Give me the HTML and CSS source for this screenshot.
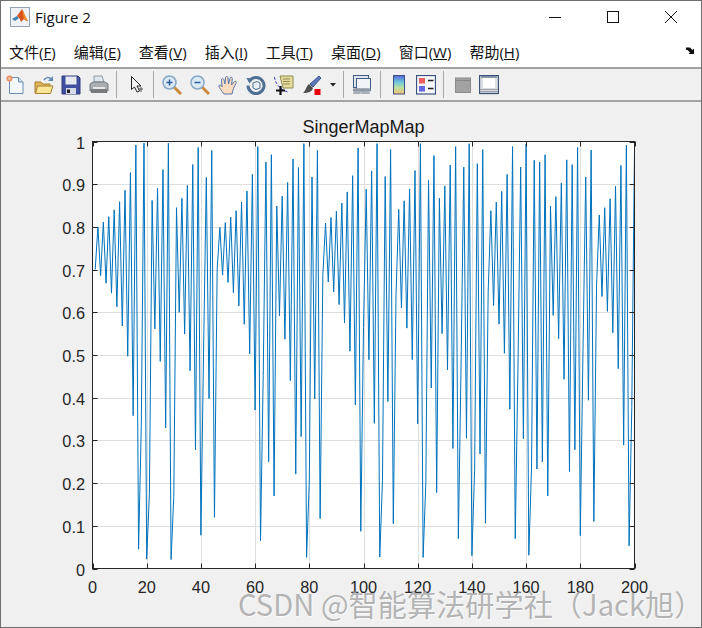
FILE: index.html
```html
<!DOCTYPE html>
<html lang="zh">
<head>
    <meta charset="UTF-8">
    <title>Figure 2</title>
    <link rel="stylesheet" href="styles.css">
</head>
<body>
    <div class="window">
        <div class="titlebar">
            <svg class="app-icon" viewBox="0 0 20 20" width="20" height="20">
                <rect x="0.5" y="0.5" width="19" height="19" fill="#eef2f6" stroke="#93a3b3"/>
                <path d="M2 12l5-3 2 2-4 3z" fill="#3f7fb5"/>
                <path d="M7 9l5-7c2 3 3 8 6 12-2 0-3-1-4-2l-3 3c-1-3-2-5-4-6z" fill="#d9541e"/>
                <path d="M12 2c2 3 3 8 6 12-2 0-3-1-4-2-1-3-1-7-2-10z" fill="#f0902c"/>
            </svg>
            <span class="window-title">Figure 2</span>
            <div class="window-controls">
                <svg class="control" viewBox="0 0 12 12" width="12" height="12"><path d="M0 6.5h12" stroke="#111" fill="none"/></svg>
                <svg class="control" viewBox="0 0 12 12" width="12" height="12"><rect x="0.5" y="0.5" width="11" height="11" stroke="#111" fill="none"/></svg>
                <svg class="control" viewBox="0 0 12 12" width="12" height="12"><path d="M0 0l12 12M12 0L0 12" stroke="#111" fill="none"/></svg>
            </div>
        </div>

        <div class="menubar">
            <span class="menu-item">文件(<u>F</u>)</span>
            <span class="menu-item">编辑(<u>E</u>)</span>
            <span class="menu-item">查看(<u>V</u>)</span>
            <span class="menu-item">插入(<u>I</u>)</span>
            <span class="menu-item">工具(<u>T</u>)</span>
            <span class="menu-item">桌面(<u>D</u>)</span>
            <span class="menu-item">窗口(<u>W</u>)</span>
            <span class="menu-item">帮助(<u>H</u>)</span>
            <svg class="dock-arrow" viewBox="0 0 10 8" width="10" height="8"><path d="M0 0.500h4l2.500 2.500 1.500-1.500v5.500h-5.500l1.500-1.500-2.500-2.500h-1.500z" fill="#111"/></svg>
        </div>

        <div class="toolbar">
            <div class="tool-group first">
                <svg class="tool" viewBox="0 0 20 20"><path d="M3.5 2.5h9l4.5 4.5v11.5h-13.500z" fill="#f3f8fe" stroke="#6d8db5"/><path d="M12.500 2.500v4.500h4.500" fill="#cfe0f2" stroke="#6d8db5"/><circle cx="3.500" cy="3.500" r="3" fill="#ef8a5a"/><circle cx="3.500" cy="3.500" r="1.200" fill="#fbd9b8"/></svg>
                <svg class="tool" viewBox="0 0 20 20"><path d="M1 7h6l2 2h7v9H1z" fill="#e0b454" stroke="#a5822f"/><path d="M1.500 18.500l2-7.500h15.500l-2.500 7.500z" fill="#fae596" stroke="#a5822f"/><path d="M10 5c2-3 5-3 7-1" fill="none" stroke="#5c86b3" stroke-width="1.500"/><path d="M19 1v5h-5z" fill="#5c86b3"/></svg>
                <svg class="tool" viewBox="0 0 20 20"><path d="M1 1h16l2 2v16H1z" fill="#40509f" stroke="#2d3a7a"/><rect x="4.500" y="1.500" width="11" height="8" fill="#e6e8f2"/><rect x="5" y="13" width="10" height="6" fill="#d8dae6"/><rect x="6" y="14.500" width="3" height="3.500" fill="#222"/></svg>
                <svg class="tool" viewBox="0 0 20 20"><path d="M5 1h8l2 6H5z" fill="#dfe7ee" stroke="#8f9ca8"/><path d="M1 9l3-2h12l3 2v7H1z" fill="#a9aeb2" stroke="#74797d"/><path d="M2 14h16v4H2z" fill="#777b7e"/><rect x="4" y="12" width="12" height="2" fill="#e7e7e7"/></svg>
            </div>
            <span class="tool-sep"></span>
            <div class="tool-group">
                <svg class="tool" viewBox="0 0 20 20"><path d="M6.500 1.500v13l3-2.500 2.500 5 2.500-1-2.500-5h4z" fill="#f6f6f6" stroke="#222"/><path d="M14 14h4M16 12v5" stroke="#555"/></svg>
            </div>
            <span class="tool-sep"></span>
            <div class="tool-group">
                <svg class="tool" viewBox="0 0 20 20"><path d="M12 12l7 7" stroke="#c98a3c" stroke-width="3"/><circle cx="7.500" cy="7.500" r="6.500" fill="#dbe9f5" stroke="#87a8c6" stroke-width="1.500"/><path d="M4.500 7.500h6M7.500 4.500v6" stroke="#2a5f9e" stroke-width="1.500"/></svg>
                <svg class="tool" viewBox="0 0 20 20"><path d="M12 12l7 7" stroke="#c98a3c" stroke-width="3"/><circle cx="7.500" cy="7.500" r="6.500" fill="#dbe9f5" stroke="#87a8c6" stroke-width="1.500"/><path d="M4.500 7.500h6" stroke="#2a5f9e" stroke-width="1.500"/></svg>
                <svg class="tool" viewBox="0 0 20 20"><path d="M6 19c-2-3-5-6-5-8 0-2 2-1 3 1L3.500 5c0-2 2-2 2.500 0L7 9 7.500 3c0-2 2.500-2 2.500 0l.5 6L12 3.500c.5-2 2.500-1.500 2.300.5L13.500 10 16 7c1.500-1.500 3-.5 2 1.500-2 3-3 6-4 10.500z" fill="#fbdcc0" stroke="#5877a8"/></svg>
                <svg class="tool" viewBox="0 0 20 20"><path d="M3.800 5.500a8 8 0 1 1-1.800 5" fill="none" stroke="#4f6f93" stroke-width="3"/><path d="M0.500 3l7 .5-4 5z" fill="#4f6f93"/><path d="M7 8l4-1.500 3 1.500v5l-4 1.500-3-1.500z" fill="#e8eef4" stroke="#4f6f93"/></svg>
                <svg class="tool" viewBox="0 0 20 20"><path d="M0.500 2c.5 6 5 12 13 15" fill="none" stroke="#3a3ad8" stroke-dasharray="3 1.500"/><path d="M6 1h13v12H9z" fill="#e7dc9a" stroke="#8d8a58"/><path d="M9 4h7M9 6.500h7M9 9h7" stroke="#8d8a58"/><path d="M2 15.500h9M6.500 11v9" stroke="#111" stroke-width="2.200"/></svg>
                <svg class="tool" viewBox="0 0 20 20"><path d="M17 1l2 2-8 9-3-3z" fill="#5b78b8" stroke="#3d5690"/><path d="M7 9l4 4c-1 4-5 5-10 5 3-2 3-7 6-9z" fill="#4e4e4e"/><rect x="12.500" y="14" width="6" height="6" fill="#e8000e"/></svg>
                <svg class="drop-arrow" viewBox="0 0 6 4" width="6" height="4"><path d="M0 0h6L3 3.500z" fill="#222"/></svg>
            </div>
            <span class="tool-sep"></span>
            <div class="tool-group">
                <svg class="tool" viewBox="0 0 20 20"><rect x="1.500" y="0.500" width="15" height="12" fill="#dfe5ec" stroke="#3f5a86"/><rect x="4.500" y="3.500" width="14" height="12" fill="#f2f5f8" stroke="#3f5a86"/><path d="M2.500 15h6M10 15h7" stroke="#8e98a3" stroke-width="3.500" stroke-linecap="round"/><path d="M2 18h6M10 18h7" stroke="#a7b0ba" stroke-width="2" stroke-linecap="round"/></svg>
            </div>
            <span class="tool-sep"></span>
            <div class="tool-group narrow">
                <svg class="tool" viewBox="0 0 20 20"><defs><linearGradient id="rainbow" x1="0" y1="0" x2="0" y2="1"><stop offset="0" stop-color="#5566d8"/><stop offset="0.35" stop-color="#6cc6e0"/><stop offset="0.65" stop-color="#b8e0a0"/><stop offset="1" stop-color="#f4c070"/></linearGradient></defs><rect x="4.500" y="0.500" width="11" height="18.500" fill="url(#rainbow)" stroke="#39507e"/></svg>
                <svg class="tool" viewBox="0 0 20 20"><rect x="0.500" y="0.500" width="19" height="18.500" fill="#f6f7f9" stroke="#39507e" stroke-width="1.200"/><rect x="3" y="3" width="6" height="5.500" fill="#ec5f5f"/><rect x="3" y="11" width="6" height="5.500" fill="#6466e6"/><path d="M12 5.500h5.500M12 13.500h5.500" stroke="#222" stroke-width="1.500"/></svg>
            </div>
            <span class="tool-sep"></span>
            <div class="tool-group narrow">
                <svg class="tool" viewBox="0 0 20 20"><rect x="3.500" y="3" width="15" height="14.500" fill="#a2a2a2" stroke="#8c8c8c"/><path d="M3 5.500h15.500" stroke="#868686"/></svg>
                <svg class="tool" viewBox="0 0 20 20"><rect x="0.500" y="0.500" width="19" height="18" fill="#dcdfe4" stroke="#3c5078" stroke-width="1.300"/><rect x="4" y="3" width="12" height="10" fill="#fff"/><path d="M1 14.500h18M1 16.500h18" stroke="#9a9fa6"/><path d="M2 2h16" stroke="#3c5078"/></svg>
            </div>
        </div>

        <div class="canvas">
            <svg id="plot" class="plot" viewBox="1 102 700 525" width="700" height="525"></svg>
            <div class="watermark">CSDN @智能算法研学社（Jack旭）</div>
        </div>
    </div>

    <script src="chart.js"></script>
</body>
</html>
```

FILE: styles.css
```css
* {
    box-sizing: border-box;
}

body {
    margin: 0;
    background: #f0f0f0;
}

.window {
    position: relative;
    width: 702px;
    height: 628px;
    display: flex;
    flex-direction: column;
    border: 1px solid #6f6f6f;
    overflow: hidden;
    font-family: "Open Sans", "Noto Sans CJK SC", sans-serif;
    color: #111;
}

.titlebar {
    height: 32px;
    display: flex;
    align-items: center;
    background: #fff;
    padding-left: 9px;
}

.app-icon {
    margin-right: 5px;
}

.window-title {
    font-size: 15px;
}

.window-controls {
    margin-left: auto;
    display: flex;
    gap: 46px;
    padding-right: 24px;
}

.menubar {
    height: 36px;
    display: flex;
    align-items: center;
    gap: 18px;
    background: #fff;
    padding: 2px 0 0 8px;
    border-bottom: 2px solid #a3a3a3;
    font-size: 15px;
}

.menu-item {
    white-space: nowrap;
}

.dock-arrow {
    margin-left: auto;
    margin-right: 5px;
}

.toolbar {
    height: 33px;
    display: flex;
    align-items: center;
    background: #f0f0f0;
    border-bottom: 2px solid #a3a3a3;
}

.tool-group {
    display: flex;
    align-items: center;
    gap: 8px;
}

.tool-group.first {
    padding-left: 5px;
    gap: 7.5px;
}

.tool-group.narrow {
    gap: 7px;
}

.tool {
    width: 20px;
    height: 20px;
    display: block;
}

.drop-arrow {
    display: block;
}

.tool-sep {
    width: 1px;
    height: 27px;
    margin: 0 8px 0 7.5px;
    background: #a8a8a8;
}

.canvas {
    flex: 1;
    background: #f0f0f0;
}

.plot {
    display: block;
}

.grid-line {
    stroke: #dedede;
    stroke-width: 1;
}

.axis-line {
    stroke: #262626;
    stroke-width: 1;
    fill: none;
}

.series {
    fill: none;
    stroke: #0072bd;
    stroke-width: 1;
    stroke-linejoin: round;
}

.tick-label {
    font-family: "Liberation Sans", sans-serif;
    font-size: 16.3px;
    fill: #262626;
}

.plot-title {
    font-family: "Liberation Sans", sans-serif;
    font-size: 18px;
    fill: #1a1a1a;
}

.watermark {
    position: absolute;
    left: 237px;
    bottom: 4px;
    font-family: "Noto Sans CJK SC", sans-serif;
    font-size: 29.2px;
    line-height: 40px;
    white-space: nowrap;
    color: rgba(150, 150, 150, 0.7);
    text-shadow: 1px 1px 1px rgba(255, 255, 255, 0.7);
}
```

FILE: chart.js
```js
const NS = 'http://www.w3.org/2000/svg';
const plot = document.getElementById('plot');

const LEFT = 92.5, RIGHT = 634.5, TOP = 141.5, BOTTOM = 568.5;
const sx = v => LEFT + (v / 200) * (RIGHT - LEFT);
const sy = v => BOTTOM - v * (BOTTOM - TOP);

// Singer map values x(1)..x(200), in thousandths
const DATA = [
    700, 800, 686, 811, 668, 824, 645, 840, 613, 859, 568, 886, 497, 927, 358, 992, 45, 332, 996, 22,
    176, 862, 561, 890, 485, 934, 329, 996, 21, 169, 845, 600, 867, 549, 897, 463, 946, 278, 986, 78,
    516, 916, 398, 979, 120, 701, 799, 687, 810, 670, 823, 646, 838, 615, 858, 572, 884, 503, 923, 371,
    988, 65, 452, 952, 250, 969, 170, 849, 592, 872, 537, 904, 440, 959, 221, 939, 309, 995, 26, 205,
    917, 397, 979, 117, 688, 809, 671, 822, 648, 837, 618, 856, 575, 882, 509, 920, 383, 985, 87, 564,
    888, 489, 931, 340, 995, 27, 206, 918, 391, 981, 105, 642, 841, 610, 861, 563, 889, 489, 932, 339,
    995, 26, 201, 909, 423, 967, 178, 867, 550, 896, 465, 945, 281, 988, 70, 474, 940, 305, 995, 30,
    229, 948, 268, 981, 106, 647, 838, 616, 858, 572, 883, 504, 923, 373, 988, 70, 474, 940, 304, 994,
    31, 236, 956, 233, 952, 250, 969, 170, 849, 593, 871, 538, 903, 443, 957, 227, 946, 278, 986, 77,
    514, 917, 394, 980, 110, 662, 828, 637, 845, 602, 866, 552, 895, 468, 944, 289, 991, 53, 377, 986
];

function add(tag, attrs, text) {
    const el = document.createElementNS(NS, tag);
    for (const k in attrs) el.setAttribute(k, attrs[k]);
    if (text !== undefined) el.textContent = text;
    plot.appendChild(el);
    return el;
}

function line(x1, y1, x2, y2, cls) {
    add('line', { x1, y1, x2, y2, class: cls });
}

add('rect', { x: LEFT, y: TOP, width: RIGHT - LEFT, height: BOTTOM - TOP, fill: '#fff' });

const xTicks = [];
for (let v = 0; v <= 200; v += 20) xTicks.push(v);
const yTicks = [];
for (let i = 0; i <= 10; i++) yTicks.push(i / 10);

xTicks.slice(1, -1).forEach(v => {
    const x = Math.round(sx(v)) + 0.5;
    line(x, TOP, x, BOTTOM, 'grid-line');
});
yTicks.slice(1, -1).forEach(v => {
    const y = Math.round(sy(v)) + 0.5;
    line(LEFT, y, RIGHT, y, 'grid-line');
});

const pts = DATA.map((v, i) => sx(i + 1).toFixed(2) + ',' + sy(v / 1000).toFixed(2));
add('polyline', { points: pts.join(' '), class: 'series' });

add('rect', { x: LEFT, y: TOP, width: RIGHT - LEFT, height: BOTTOM - TOP, class: 'axis-line' });

xTicks.forEach(v => {
    const x = Math.round(sx(v)) + 0.5;
    line(x, BOTTOM, x, BOTTOM - 5, 'axis-line');
    line(x, TOP, x, TOP + 5, 'axis-line');
    add('text', { x: sx(v), y: 593, 'text-anchor': 'middle', class: 'tick-label' }, v);
});
yTicks.forEach(v => {
    const y = Math.round(sy(v)) + 0.5;
    line(LEFT, y, LEFT + 5, y, 'axis-line');
    line(RIGHT, y, RIGHT - 5, y, 'axis-line');
    add('text', { x: 85, y: y + 6, 'text-anchor': 'end', class: 'tick-label' }, v);
});

add('text', { x: 363.5, y: 133, 'text-anchor': 'middle', class: 'plot-title' }, 'SingerMapMap');
```
